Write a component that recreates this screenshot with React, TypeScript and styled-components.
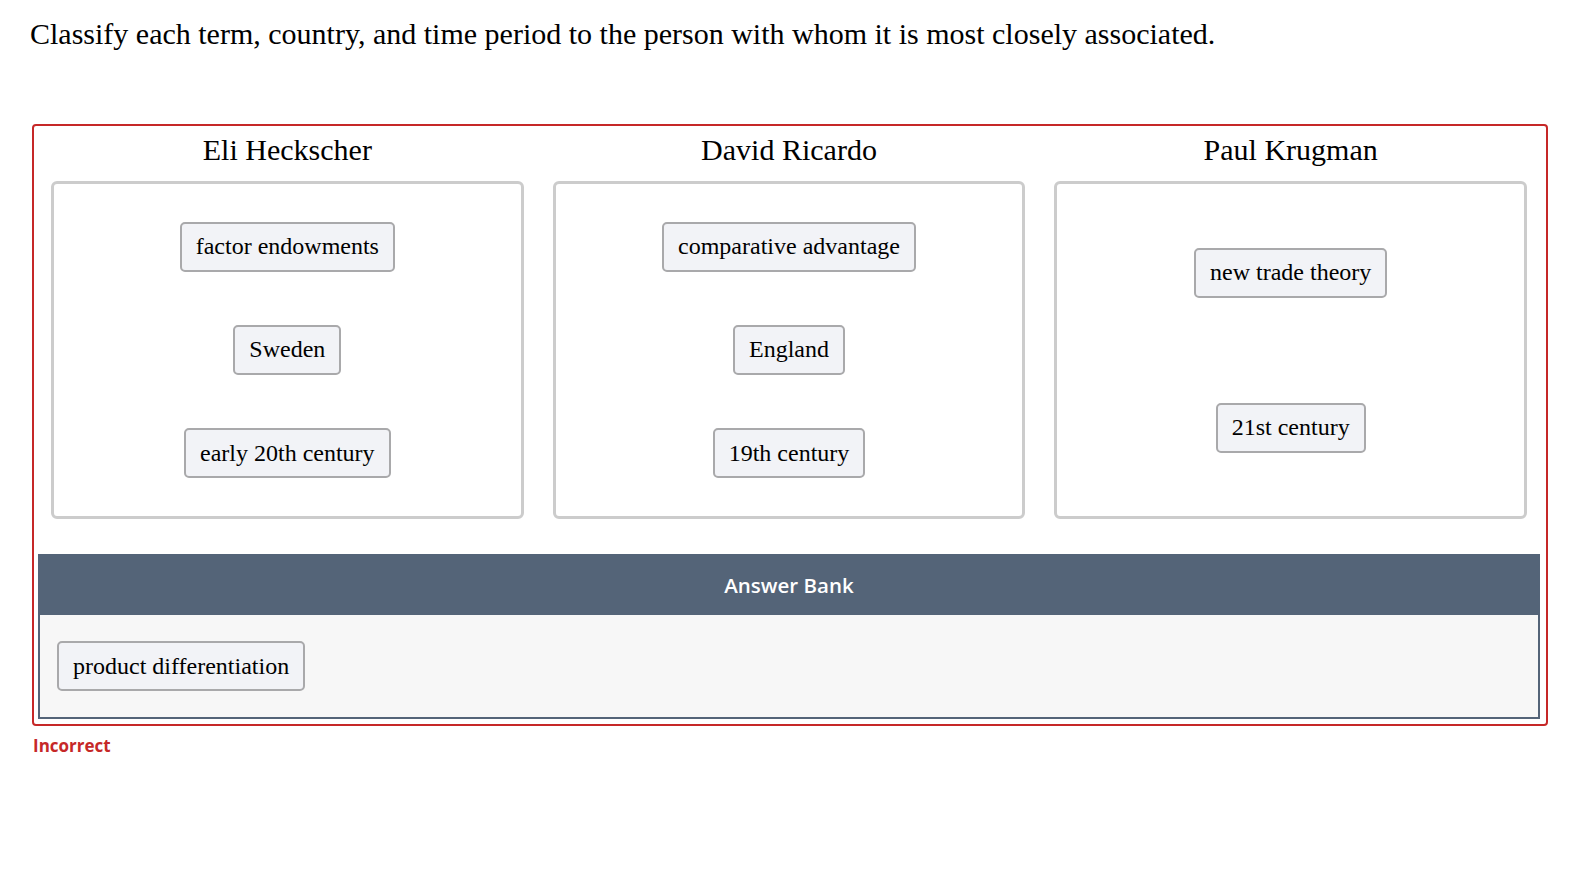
import React from "react";
import styled, { createGlobalStyle } from "styled-components";

const Global = createGlobalStyle`
  html, body { margin: 0; padding: 0; background: #fff; }
  body { font-family: "Liberation Serif", "Times New Roman", serif; color: #000; }
`;

const Page = styled.div`
  padding: 14px 22px 0 32px;
`;

const Prompt = styled.p`
  margin: 0 0 0 -2px;
  font-size: 30px;
  line-height: 40px;
`;

const Frame = styled.div`
  margin-top: 70px;
  border: 2px solid #c62828;
  border-radius: 4px;
  padding: 0 6px 5px 4px;
`;

const Columns = styled.div`
  display: grid;
  grid-template-columns: repeat(3, 1fr);
  column-gap: 29px;
  padding: 0 13px 0 13px;
`;

const Column = styled.div`
  display: flex;
  flex-direction: column;
`;

const Heading = styled.div`
  height: 55px;
  line-height: 48px;
  text-align: center;
  font-size: 30px;
`;

const DropBox = styled.div`
  height: 338px;
  box-sizing: border-box;
  border: 3px solid #cccccc;
  border-radius: 6px;
  padding: 11px;
  display: flex;
  flex-direction: column;
  align-items: center;
  justify-content: space-around;
`;

const Chip = styled.div`
  box-sizing: border-box;
  height: 50px;
  padding: 0 14px;
  display: flex;
  align-items: center;
  border: 2px solid #a9a9ab;
  border-radius: 5px;
  background: #f2f3f7;
  font-size: 24px;
  white-space: nowrap;
`;

const Bank = styled.div`
  margin-top: 35px;
  border: 2px solid #546478;
  border-top: none;
`;

const BankHeader = styled.div`
  height: 61px;
  background: #546478;
  color: #fff;
  display: flex;
  align-items: center;
  justify-content: center;
  font-family: "Open Sans", "Noto Sans", sans-serif;
  font-weight: 600;
  font-size: 20.5px;
  margin: 0 -2px;
`;

const BankBody = styled.div`
  background: #f7f7f7;
  padding: 26px 17px 26px 17px;
  display: flex;
  flex-wrap: wrap;
  gap: 16px;
`;

const Status = styled.div`
  margin-top: 8px;
  padding-left: 1px;
  color: #c62828;
  font-family: "Open Sans", "Noto Sans", sans-serif;
  font-weight: 700;
  font-size: 17px;
`;

const columns = [
  { name: "Eli Heckscher", items: ["factor endowments", "Sweden", "early 20th century"] },
  { name: "David Ricardo", items: ["comparative advantage", "England", "19th century"] },
  { name: "Paul Krugman", items: ["new trade theory", "21st century"] },
];

export default function App() {
  return (
    <>
      <Global />
      <Page>
        <Prompt>
          Classify each term, country, and time period to the person with whom it is most closely associated.
        </Prompt>
        <Frame>
          <Columns>
            {columns.map((c) => (
              <Column key={c.name}>
                <Heading>{c.name}</Heading>
                <DropBox>
                  {c.items.map((i) => (
                    <Chip key={i}>{i}</Chip>
                  ))}
                </DropBox>
              </Column>
            ))}
          </Columns>
          <Bank>
            <BankHeader>Answer Bank</BankHeader>
            <BankBody>
              <Chip>product differentiation</Chip>
            </BankBody>
          </Bank>
        </Frame>
        <Status>Incorrect</Status>
      </Page>
    </>
  );
}
